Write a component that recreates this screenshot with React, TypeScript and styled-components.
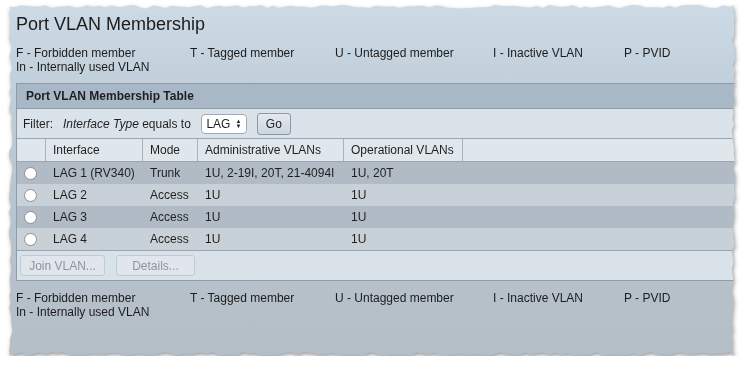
import { FC } from 'react';
import styled, { createGlobalStyle } from 'styled-components';

const GlobalStyle = createGlobalStyle`
  html, body {
    margin: 0;
    padding: 0;
    background: #ffffff;
  }
  body {
    font-family: 'Liberation Sans', Arial, sans-serif;
    color: #1f1f1f;
  }
`;

const PAGE_W = 726;
const PAGE_H = 351;

// 破れた紙の縁（決まった乱数で作る）
const tornEdge = () => {
  let seed = 7;
  const rnd = () => {
    seed = (seed * 9301 + 49297) % 233280;
    return seed / 233280;
  };
  const pts: string[] = [];
  const step = 6;
  for (let x = 0; x <= PAGE_W; x += step) pts.push(`${x}px ${(rnd() * 3.5).toFixed(1)}px`);
  for (let y = 0; y <= PAGE_H; y += step) pts.push(`${(PAGE_W - rnd() * 3.5).toFixed(1)}px ${y}px`);
  for (let x = PAGE_W; x >= 0; x -= step) pts.push(`${x}px ${(PAGE_H - rnd() * 4).toFixed(1)}px`);
  for (let y = PAGE_H; y >= 0; y -= step) pts.push(`${(rnd() * 3.5).toFixed(1)}px ${y}px`);
  return `polygon(${pts.join(', ')})`;
};

const Stage = styled.div`
  padding: 5px 0 0 9px;
  filter: drop-shadow(1px 2px 2px rgba(0, 0, 0, 0.4));
`;

const Page = styled.div`
  width: ${PAGE_W}px;
  height: ${PAGE_H}px;
  box-sizing: border-box;
  padding: 8px 0 0 7px;
  background: linear-gradient(180deg, #cbdae4 0%, #c0cfd9 24%, #b8c4ce 55%, #b4bec7 100%);
  clip-path: ${tornEdge()};
  display: flex;
  flex-direction: column;
`;

const Title = styled.h1`
  margin: 0;
  font-size: 18px;
  line-height: 22px;
  font-weight: normal;
  color: #1c1c1c;
`;

const Legend = styled.div<{ $top: number }>`
  margin-top: ${p => p.$top}px;
  display: grid;
  grid-template-columns: 174px 145px 158px 131px auto;
  font-size: 12px;
  line-height: 14px;
  color: #1c1c1c;
  white-space: nowrap;
`;

const TableBox = styled.div`
  margin-top: 9px;
  border: 1px solid #8e9ca8;
  border-right: none;
  font-size: 12px;
  white-space: nowrap;
`;

const TableCaption = styled.div`
  height: 24px;
  line-height: 24px;
  padding-left: 9px;
  font-weight: bold;
  background: #a9b8c6;
  border-bottom: 1px solid #8e9ca8;
`;

const FilterBar = styled.div`
  height: 29px;
  display: flex;
  align-items: center;
  padding-left: 6px;
  background: #dbe3ea;
  border-bottom: 1px solid #9aa7b2;
  gap: 6px;
`;

const FilterLabel = styled.span`
  margin-right: 4px;
`;

const Select = styled.div`
  width: 46px;
  height: 20px;
  margin-left: 4px;
  box-sizing: border-box;
  background: #ffffff;
  border: 1px solid #a3a9ae;
  border-radius: 4px;
  display: flex;
  align-items: center;
  justify-content: center;
  gap: 5px;
  font-size: 12px;
`;

const Arrows = styled.span`
  display: flex;
  flex-direction: column;
  font-size: 6px;
  line-height: 5px;
`;

const GoButton = styled.div`
  margin-left: 4px;
  width: 34px;
  height: 22px;
  box-sizing: border-box;
  border: 1px solid #8b99a5;
  border-radius: 3px;
  background: linear-gradient(180deg, #e3e9ee, #cdd6de);
  display: flex;
  align-items: center;
  justify-content: center;
`;

const COLS = '29px 97px 55px 146px 119px 1fr';

const HeadRow = styled.div`
  display: grid;
  grid-template-columns: ${COLS};
  height: 22px;
  background: #dfe6ec;
  border-bottom: 1px solid #9aa7b2;
`;

const HeadCell = styled.div<{ $last?: boolean }>`
  padding-left: 7px;
  line-height: 22px;
  border-right: ${p => (p.$last ? 'none' : '1px solid #a7b3bd')};
`;

const Row = styled.div<{ $dark: boolean }>`
  display: grid;
  grid-template-columns: ${COLS};
  height: 22px;
  align-items: center;
  background: ${p => (p.$dark ? '#b0bbc5' : '#c9d1d8')};
`;

const Cell = styled.div`
  padding-left: 7px;
`;

const Radio = styled.span`
  display: block;
  width: 13px;
  height: 13px;
  margin-left: 7px;
  box-sizing: border-box;
  border-radius: 50%;
  border: 1px solid #8a8f94;
  background: #ffffff;
`;

const ActionBar = styled.div`
  height: 29px;
  display: flex;
  align-items: center;
  gap: 11px;
  padding-left: 3px;
  background: #dae2e9;
  border-top: 1px solid #9aa7b2;
`;

const ActionButton = styled.div<{ $w: number }>`
  width: ${p => p.$w}px;
  height: 21px;
  box-sizing: border-box;
  border: 1px solid #c2cad1;
  border-radius: 3px;
  background: #e0e6eb;
  color: #8e969d;
  display: flex;
  align-items: center;
  justify-content: center;
`;

const legendItems = [
  'F - Forbidden member',
  'T - Tagged member',
  'U - Untagged member',
  'I - Inactive VLAN',
  'P - PVID',
  'In - Internally used VLAN'
];

const rows = [
  { name: 'LAG 1 (RV340)', mode: 'Trunk', admin: '1U, 2-19I, 20T, 21-4094I', oper: '1U, 20T' },
  { name: 'LAG 2', mode: 'Access', admin: '1U', oper: '1U' },
  { name: 'LAG 3', mode: 'Access', admin: '1U', oper: '1U' },
  { name: 'LAG 4', mode: 'Access', admin: '1U', oper: '1U' }
];

const LegendBlock: FC<{ top: number }> = ({ top }) => (
  <Legend $top={top}>
    {legendItems.map(item => (
      <span key={item}>{item}</span>
    ))}
  </Legend>
);

const App: FC = () => {
  return (
    <>
      <GlobalStyle />
      <Stage>
        <Page>
          <Title>Port VLAN Membership</Title>
          <LegendBlock top={11} />
          <TableBox>
            <TableCaption>Port VLAN Membership Table</TableCaption>
            <FilterBar>
              <FilterLabel>Filter:</FilterLabel>
              <span>
                <i>Interface Type</i> equals to
              </span>
              <Select>
                LAG
                <Arrows>
                  <span>▲</span>
                  <span>▼</span>
                </Arrows>
              </Select>
              <GoButton>Go</GoButton>
            </FilterBar>
            <HeadRow>
              <HeadCell />
              <HeadCell>Interface</HeadCell>
              <HeadCell>Mode</HeadCell>
              <HeadCell>Administrative VLANs</HeadCell>
              <HeadCell>Operational VLANs</HeadCell>
              <HeadCell $last />
            </HeadRow>
            {rows.map((r, i) => (
              <Row key={r.name} $dark={i % 2 === 0}>
                <Radio />
                <Cell>{r.name}</Cell>
                <Cell>{r.mode}</Cell>
                <Cell>{r.admin}</Cell>
                <Cell>{r.oper}</Cell>
                <Cell />
              </Row>
            ))}
            <ActionBar>
              <ActionButton $w={85}>Join VLAN...</ActionButton>
              <ActionButton $w={79}>Details...</ActionButton>
            </ActionBar>
          </TableBox>
          <LegendBlock top={10} />
        </Page>
      </Stage>
    </>
  );
};

export default App;
